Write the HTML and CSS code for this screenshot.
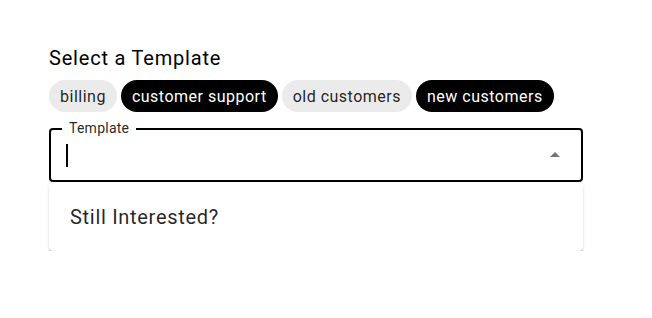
FILE: index.html
```html
<!DOCTYPE html>
<html>
<head>
<meta charset="utf-8">
<link rel="stylesheet" href="styles.css">
</head>
<body>
<div class="wrap">
  <h1 class="title">Select a Template</h1>
  <div class="chips">
    <span class="chip">billing</span>
    <span class="chip chip-dark">customer support</span>
    <span class="chip">old customers</span>
    <span class="chip chip-dark">new customers</span>
  </div>
  <div class="field">
    <span class="label">Template</span>
    <span class="caret"></span>
    <svg class="arrow" viewBox="0 0 24 24" width="24" height="24"><path d="M7 14l5-5 5 5z"/></svg>
  </div>
  <div class="paper">
    <div class="option">Still Interested?</div>
  </div>
</div>
</body>
</html>
```
FILE: styles.css
```css
html, body {
  margin: 0;
  padding: 0;
  background: #fff;
}
body {
  font-family: Roboto, "Liberation Sans", sans-serif;
  color: rgba(0,0,0,0.87);
}
.wrap {
  width: 534px;
  padding: 46px 0 0 49px;
}
.title {
  margin: 0;
  font-size: 20px;
  font-weight: 400;
  line-height: 24px;
  letter-spacing: 0.8px;
  color: #000;
}
.chips {
  display: flex;
  gap: 4px;
  margin-top: 10px;
}
.chip {
  display: inline-flex;
  align-items: center;
  height: 32px;
  padding: 0 11px;
  border-radius: 16px;
  background: #ebebeb;
  font-size: 16px;
  letter-spacing: 0.5px;
  color: rgba(0,0,0,0.87);
  white-space: nowrap;
}
.chip-dark {
  background: #000;
  color: #fff;
}
.field {
  position: relative;
  box-sizing: border-box;
  height: 54px;
  margin-top: 16px;
  border: 2px solid #000;
  border-radius: 4px;
  display: flex;
  align-items: center;
  padding: 0 14px 0 15px;
}
.label {
  position: absolute;
  top: -10px;
  left: 11px;
  padding: 0 7px;
  background: #fff;
  font-size: 14px;
  line-height: 16px;
  letter-spacing: 0.25px;
  color: rgba(0,0,0,0.87);
}
.caret {
  width: 2px;
  height: 23px;
  background: #000;
}
.arrow {
  margin-left: auto;
  fill: rgba(0,0,0,0.54);
}
.paper {
  margin-top: 1px;
  height: 68px;
  border-radius: 4px;
  background: #fff;
  box-shadow: 0px 2px 1px -1px rgba(0,0,0,0.22), 0px 1px 1px 0px rgba(0,0,0,0.16), 0px 1px 3px 0px rgba(0,0,0,0.14);
  display: flex;
  align-items: center;
}
.option {
  padding-left: 21px;
  font-size: 20px;
  line-height: 24px;
  letter-spacing: 0.7px;
  color: rgba(0,0,0,0.87);
}
```
